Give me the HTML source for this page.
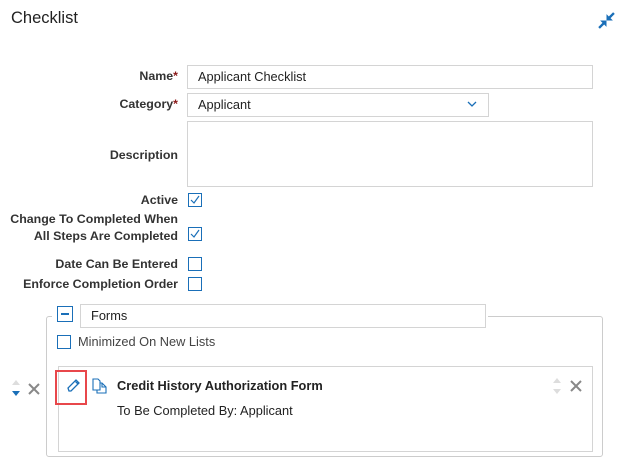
<!DOCTYPE html>
<html><head><style>
body{margin:0;width:619px;height:465px;background:#fff;font-family:"Liberation Sans",sans-serif;color:#222;position:relative;overflow:hidden}
.a{position:absolute}
.lbl{position:absolute;right:441px;font-size:12.4px;font-weight:bold;color:#333;text-align:right;white-space:nowrap}
.req{color:#8b1a1a}
.in{position:absolute;border:1px solid #d4d4d4;background:#fff;font-size:12.8px;box-sizing:border-box;padding-left:10px;line-height:22px}
.cb{position:absolute;width:12px;height:12px;border:1px solid #1a6fb8;background:#fff}
.cb svg{position:absolute;left:1px;top:1px}
</style></head><body>
<div class="a" style="left:11px;top:9px;font-size:16.5px;color:#222">Checklist</div>
<svg class="a" style="left:598px;top:12px" width="17" height="17" viewBox="0 0 16 16"><path d="M15 1 L10 6" stroke="#1a6fb8" stroke-width="2.2"/><path d="M8 2 V8 H14 Z" fill="#1a6fb8"/><path d="M1 15 L6 10" stroke="#1a6fb8" stroke-width="2.2"/><path d="M2 8 H8 V14 Z" fill="#1a6fb8"/></svg>

<div class="lbl" style="top:69px">Name<span class="req">*</span></div>
<div class="in" style="left:187px;top:65px;width:406px;height:24px">Applicant Checklist</div>
<div class="lbl" style="top:97px">Category<span class="req">*</span></div>
<div class="in" style="left:187px;top:93px;width:302px;height:24px">Applicant</div>
<svg class="a" style="left:467px;top:101px" width="10" height="6"><path d="M1 1 L5 5 L9 1" stroke="#1a6fb8" stroke-width="1.3" fill="none"/></svg>
<div class="lbl" style="top:148px">Description</div>
<div class="in" style="left:187px;top:121px;width:406px;height:66px"></div>

<div class="lbl" style="top:193px">Active</div>
<div class="cb" style="left:188px;top:193px"><svg width="10" height="10"><path d="M1 5 L4 8 L9 1" stroke="#1a6fb8" stroke-width="1.2" fill="none"/></svg></div>
<div class="lbl" style="top:211px;line-height:17px">Change To Completed When<br>All Steps Are Completed</div>
<div class="cb" style="left:188px;top:227px"><svg width="10" height="10"><path d="M1 5 L4 8 L9 1" stroke="#1a6fb8" stroke-width="1.2" fill="none"/></svg></div>
<div class="lbl" style="top:257px">Date Can Be Entered</div>
<div class="cb" style="left:188px;top:257px"></div>
<div class="lbl" style="top:277px">Enforce Completion Order</div>
<div class="cb" style="left:188px;top:277px"></div>

<div class="a" style="left:46px;top:316px;width:555px;height:139px;border:1px solid #ccc;border-radius:3px"></div>
<div class="a" style="left:52px;top:303px;width:436px;height:26px;background:#fff"></div>
<div class="a" style="left:57px;top:306px;width:14px;height:14px;border:1px solid #1a6fb8"><div class="a" style="left:3px;top:6px;width:8px;height:2px;background:#1a6fb8"></div></div>
<div class="in" style="left:80px;top:304px;width:406px;height:24px">Forms</div>
<div class="cb" style="left:57px;top:335px;border-color:#1a6fb8"></div>
<div class="a" style="left:78px;top:334px;font-size:12.8px;color:#444">Minimized On New Lists</div>

<div class="a" style="left:58px;top:366px;width:533px;height:84px;border:1px solid #d4d4d4"></div>
<div class="a" style="left:55px;top:370px;width:28px;height:31px;border:2px solid #e8474b"></div>
<svg class="a" style="left:66px;top:377px" width="16" height="16" viewBox="0 0 16 16"><path d="M3 14 L2 11 L10 3 L13 6 L5 14 Z M9 4 L12 7" stroke="#1a6fb8" stroke-width="1.3" fill="none"/></svg>
<svg class="a" style="left:92px;top:378px" width="16" height="16" viewBox="0 0 16 16"><path d="M1 1 H6 L8 3 V12 H1 Z M8 5 H10 L14 9 V15 H5 V12 M10 5 V9 H14" stroke="#1a6fb8" stroke-width="1.1" fill="none"/></svg>
<div class="a" style="left:117px;top:378px;font-size:12.8px;font-weight:bold;color:#222">Credit History Authorization Form</div>
<div class="a" style="left:117px;top:403px;font-size:12.8px;color:#222">To Be Completed By: Applicant</div>
<svg class="a" style="left:552px;top:376px" width="10" height="20"><path d="M1 7 L5 2 L9 7 Z" fill="#ddd"/><path d="M1 13 L5 18 L9 13 Z" fill="#ddd"/></svg>
<svg class="a" style="left:570px;top:380px" width="12" height="12"><path d="M1 1 L11 11 M11 1 L1 11" stroke="#888" stroke-width="2"/></svg>
<svg class="a" style="left:11px;top:378px" width="10" height="20"><path d="M1 7 L5 2 L9 7 Z" fill="#ddd"/><path d="M1 13 L5 18 L9 13 Z" fill="#1a6fb8"/></svg>
<svg class="a" style="left:28px;top:383px" width="12" height="12"><path d="M1 1 L11 11 M11 1 L1 11" stroke="#888" stroke-width="2"/></svg>
</body></html>
